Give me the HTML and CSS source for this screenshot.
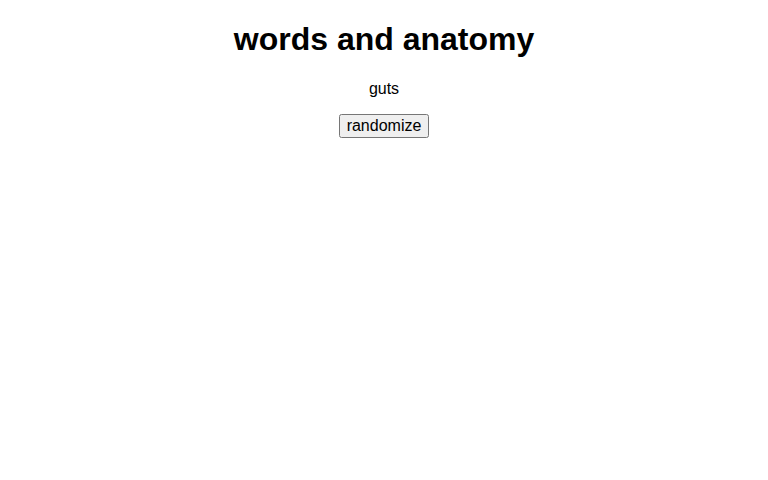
FILE: index.html
```html
<!DOCTYPE html>
<html lang="en">
  <head>
    <meta charset="UTF-8" />
    <meta name="viewport" content="width=device-width, initial-scale=1.0" />
    <title>words and anatomy</title>
    <link rel="stylesheet" href="styles.css">
  </head>
  <body>
    <div class="app">
      <h1>words and anatomy</h1>
      <p class="word">guts</p>
      <div class="controls">
        <button id="randomizeButton">randomize</button>
      </div>
    </div>
  </body>
</html>
```

FILE: styles.css
```css
body {
  margin: 0;
  font-family: "Liberation Sans", Arial, sans-serif;
  color: #000;
  background: #fff;
}

.app {
  text-align: center;
}

h1 {
  font-size: 32px;
}

.word {
  font-size: 16px;
}

.controls button {
  font-family: "Liberation Sans", Arial, sans-serif;
  font-size: 16px;
}
```
